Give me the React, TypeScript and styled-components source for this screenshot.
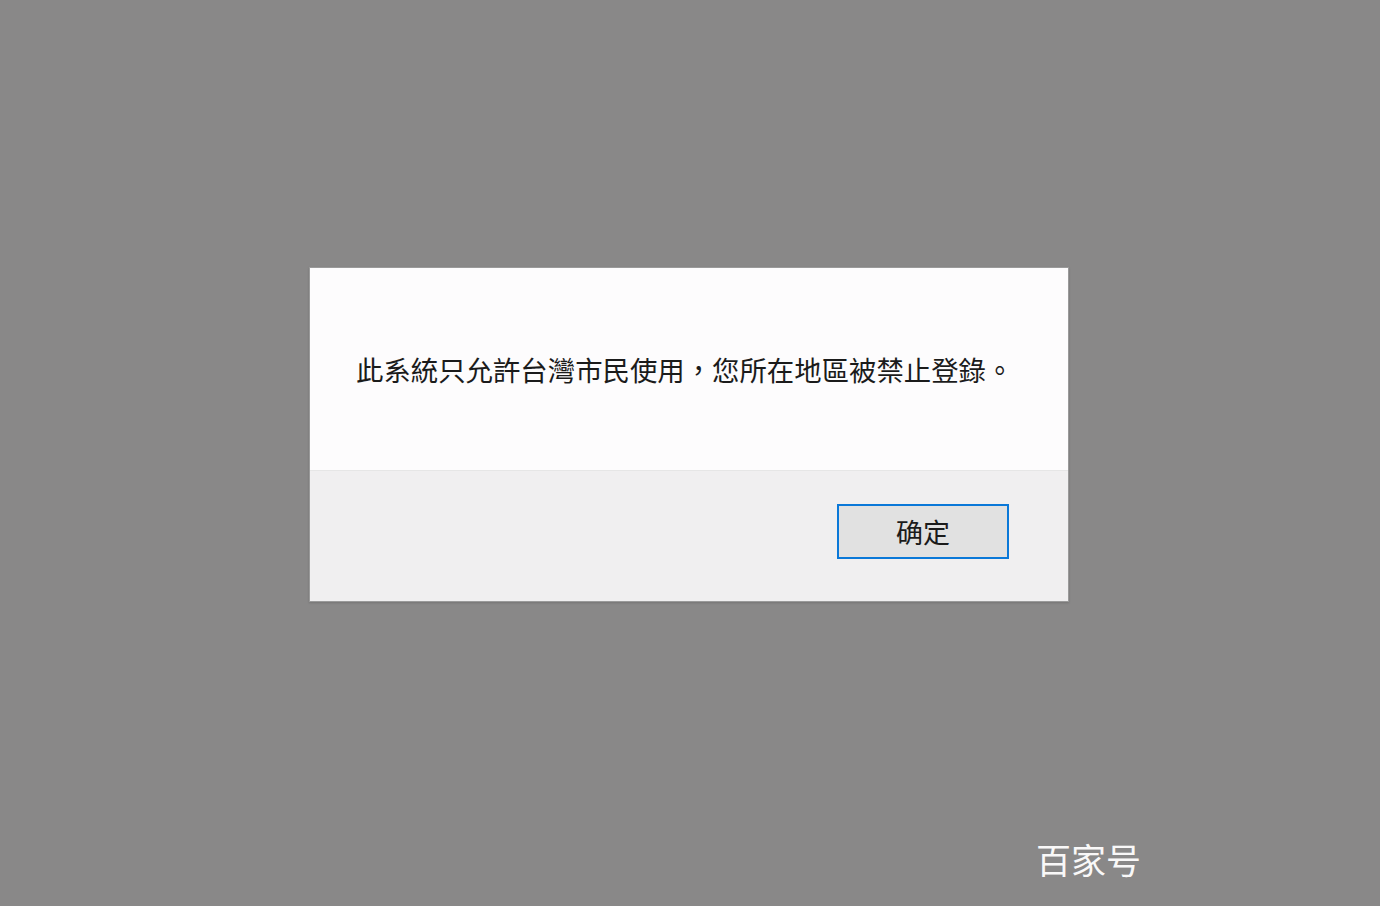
import React from 'react'
import styled, { createGlobalStyle } from 'styled-components'

const GlobalStyle = createGlobalStyle`
  html, body {
    margin: 0;
    padding: 0;
    height: 100%;
    background: #898888;
  }
  #root {
    min-height: 100%;
  }
`

export default function App() {
  return (
    <>
      <GlobalStyle />
      <Screen>
        <Dialog>
          <Message>此系統只允許台灣市民使用，您所在地區被禁止登錄。</Message>
          <Footer>
            <OkButton>确定</OkButton>
          </Footer>
        </Dialog>
        <Watermark>百家号</Watermark>
      </Screen>
    </>
  )
}

const Screen = styled.div`
  position: relative;
  width: 1380px;
  height: 906px;
  display: flex;
  flex-direction: column;
  align-items: center;
  padding-top: 267px;
  box-sizing: border-box;
  background: #898888;
  font-family: 'Noto Sans CJK TC', 'Noto Sans CJK SC', sans-serif;
  overflow: hidden;
`

const Dialog = styled.div`
  width: 760px;
  margin-left: -2px;
  display: flex;
  flex-direction: column;
  border: 1px solid #9a9a9a;
  box-sizing: border-box;
  box-shadow: 0 1px 2px rgba(0, 0, 0, 0.15);
`

const Message = styled.div`
  height: 202px;
  display: flex;
  align-items: center;
  padding: 0 0 0 46px;
  background: #fdfcfd;
  color: #1b1b1b;
  font-size: 27.4px;
  letter-spacing: 0;
  border-bottom: 1px solid #e6e6e6;
`

const Footer = styled.div`
  height: 130px;
  display: flex;
  justify-content: flex-end;
  align-items: flex-start;
  padding: 33px 59px 0 0;
  box-sizing: border-box;
  background: #f0eff0;
`

const OkButton = styled.button`
  width: 172px;
  height: 55px;
  border: 2px solid #0a78d8;
  background: #e1e1e1;
  color: #1b1b1b;
  font-family: inherit;
  font-size: 27px;
  padding: 0;
  cursor: pointer;
`

const Watermark = styled.div`
  position: absolute;
  left: 1036px;
  bottom: 22px;
  color: #ffffff;
  font-size: 35px;
  opacity: 0.95;
`
